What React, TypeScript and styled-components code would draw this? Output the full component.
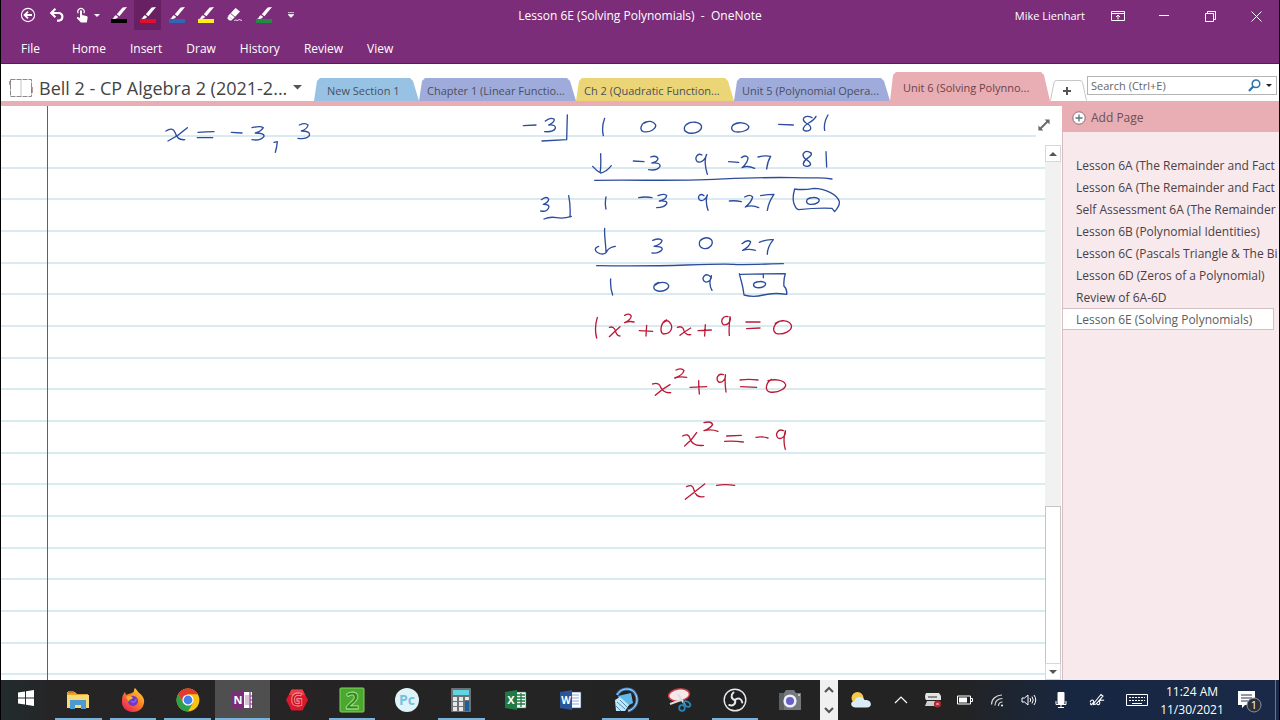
import React from "react";
import styled, { createGlobalStyle } from "styled-components";

const GlobalStyle = createGlobalStyle`
  *, *::before, *::after { box-sizing: border-box; }
  body { margin: 0; background: #000; }
  button, input { font: inherit; color: inherit; }
  button { border: 0; padding: 0; background: none; }
  ul { list-style: none; margin: 0; padding: 0; }
`;

const Frame = styled.div`
  display: flex;
  flex-direction: column;
  height: 100vh;
  border: solid #000;
  border-width: 0 1px;
  background: #fff;
  font-family: "Open Sans", "Noto Sans", sans-serif;
  font-size: 12px;
  line-height: 16px;
  overflow: hidden;
`;

/* ---------- window header ---------- */

const Header = styled.header`
  flex: none;
  background: #7c2d7a;
  border-bottom: 1px solid #5b1a5a;
  color: #fff;
`;

const TitleRow = styled.div`
  display: grid;
  grid-template-columns: 1fr auto 1fr;
  height: 32px;
`;

const QuickTools = styled.div`
  display: flex;
  gap: 2px;
  padding-left: 13px;
`;

const ToolButton = styled.button<{ $active?: boolean; $width?: number }>`
  display: flex;
  align-items: center;
  justify-content: center;
  gap: 6px;
  width: ${(p) => p.$width ?? 27}px;
  height: 30px;
  background: ${(p) => (p.$active ? "#672163" : "transparent")};
`;

const WindowTitle = styled.h1`
  margin: 0;
  align-self: center;
  font-size: 12px;
  font-weight: 400;
  white-space: pre;
`;

const WindowControls = styled.div`
  display: flex;
  justify-content: flex-end;
  align-items: center;
`;

const UserName = styled.span`
  margin-right: 10px;
  font-size: 11px;
`;

const ControlButton = styled.button`
  display: flex;
  align-items: center;
  justify-content: center;
  width: 46px;
  height: 32px;
`;

const Menu = styled.nav`
  display: flex;
  align-items: center;
  gap: 24px;
  height: 31px;
  padding: 2px 0 0 20px;
`;

const MenuButton = styled.button<{ $wide?: boolean }>`
  margin-right: ${(p) => (p.$wide ? 8 : 0)}px;
`;

/* ---------- notebook bar ---------- */

const NotebookBar = styled.div`
  display: flex;
  flex: none;
  align-items: flex-end;
  height: 37px;
  padding-right: 2px;
`;

const NotebookButton = styled.button`
  display: flex;
  flex: none;
  align-items: center;
  gap: 6px;
  width: 313px;
  height: 27px;
  padding-left: 8px;
  color: #444;
  font-size: 18px;
  line-height: 24px;
  white-space: nowrap;
`;

const Tabs = styled.div`
  display: flex;
  flex: 1;
  align-items: flex-end;
  min-width: 0;
`;

const Tab = styled.button<{ $color: string; $width: number; $active?: boolean; $inset?: boolean }>`
  flex: 0 1 ${(p) => p.$width}px;
  height: ${(p) => (p.$active ? 29 : 23)}px;
  padding: 2px 8px 0 ${(p) => (p.$active || p.$inset ? 13 : 8)}px;
  overflow: hidden;
  background: ${(p) => p.$color};
  clip-path: polygon(0 100%, 3px 3px, 6px 0, calc(100% - 9px) 0, calc(100% - 6px) 3px, 100% 100%);
  color: ${(p) => (p.$active ? "#6b4249" : "#4a5060")};
  font-size: 11px;
  text-align: left;
  white-space: nowrap;
`;

const NewTab = styled.button`
  flex: none;
  width: 37px;
  height: 21px;
`;

const SearchBox = styled.form`
  display: flex;
  flex: none;
  align-self: flex-start;
  align-items: center;
  width: 190px;
  height: 19px;
  margin-top: 12px;
  border: 1px solid #b4b4b4;
  color: #555;
`;

const SearchInput = styled.input`
  flex: 1;
  min-width: 0;
  height: 17px;
  padding: 0 3px;
  border: 0;
  outline: 0;
  background: transparent;
  font-size: 11px;
  &::placeholder { color: #666; opacity: 1; }
`;

const SearchButton = styled.button`
  display: flex;
  align-items: center;
  gap: 5px;
  padding-right: 4px;
`;

/* ---------- body ---------- */

const Body = styled.div`
  display: flex;
  flex: 1;
  min-height: 0;
`;

const PageArea = styled.main`
  display: flex;
  flex: 1;
  min-width: 0;
  border-top: 5px solid #e9aeb4;
`;

const Sheet = styled.svg`
  display: block;
  flex: 1;
  min-width: 0;
  height: 100%;
`;

const Rail = styled.div`
  display: flex;
  flex: none;
  flex-direction: column;
  width: 17px;
`;

const ExpandButton = styled.button`
  flex: none;
  width: 26px;
  height: 39px;
  margin-left: -9px;
  padding: 2px 0 0 1px;
  background: #fff;
  text-align: left;
`;

const ScrollTrack = styled.div`
  display: flex;
  flex: 1;
  flex-direction: column;
  width: 16px;
  background: #f1f1f1;
`;

const ScrollStep = styled.button`
  display: flex;
  flex: none;
  align-items: center;
  justify-content: center;
  height: 17px;
  border: 1px solid #d4d8dc;
  background: #fff;
`;

const ScrollGap = styled.div`
  flex: 11;
`;

const ScrollThumb = styled.div`
  flex: 5;
  border: 1px solid #c4c4c4;
  border-bottom: 0;
  background: #fff;
`;

const PagePane = styled.aside`
  display: flex;
  flex: none;
  flex-direction: column;
  width: 217px;
  background: #f8eaec;
`;

const AddPage = styled.button`
  display: flex;
  flex: none;
  align-items: center;
  gap: 5px;
  height: 31px;
  padding: 2px 0 0 10px;
  background: #e9aeb4;
  color: #6b5055;
  text-align: left;
`;

const PageList = styled.ul`
  flex: 1;
  padding: 22px 5px 0 0;
  border-left: 1px solid #d8bcc1;
`;

const PageLink = styled.a<{ $selected?: boolean }>`
  display: block;
  height: 22px;
  margin-left: -1px;
  padding-left: 13px;
  border: 1px solid ${(p) => (p.$selected ? "#d5bfc3" : "transparent")};
  background: ${(p) => (p.$selected ? "#fff" : "transparent")};
  color: ${(p) => (p.$selected ? "#5c5c5c" : "#4a4045")};
  line-height: 22px;
  text-decoration: none;
  white-space: nowrap;
`;

/* ---------- taskbar ---------- */

const Taskbar = styled.footer`
  display: flex;
  flex: none;
  height: 40px;
  background: linear-gradient(90deg, #222b2d 0, #262425 60px, #232323 75%, #172742 84%, #1a2947 100%);
  color: #fff;
`;

const StartButton = styled.button`
  flex: none;
  width: 50px;
`;

const Apps = styled.div`
  display: flex;
  flex: 1;
  min-width: 0;
  margin-right: 3px;
`;

const AppButton = styled.button<{ $running?: boolean; $active?: boolean }>`
  position: relative;
  display: flex;
  flex: 1;
  align-items: center;
  justify-content: center;
  min-width: 0;
  background: ${(p) => (p.$active ? "#4f4f50" : "transparent")};
  &::after {
    content: "";
    position: absolute;
    right: ${(p) => (p.$active ? 0 : 4)}px;
    bottom: 0;
    left: ${(p) => (p.$active ? 0 : 4)}px;
    height: 2px;
    background: ${(p) => (p.$running || p.$active ? "#79b3dc" : "transparent")};
  }
`;

const Stepper = styled.div`
  display: flex;
  flex: none;
  flex-direction: column;
  width: 18px;
  background: #f0f0f0;
`;

const StepperButton = styled.button`
  display: flex;
  flex: 1;
  align-items: center;
  justify-content: center;
`;

const Tray = styled.div`
  display: flex;
  flex: none;
`;

const TrayButton = styled.button<{ $width?: number }>`
  display: flex;
  align-items: center;
  justify-content: center;
  width: ${(p) => p.$width ?? 32}px;
`;

const Clock = styled.button`
  width: 70px;
  padding-top: 2px;
  line-height: 18px;
  text-align: center;
`;

const ShowDesktop = styled.button`
  width: 4px;
  margin-left: 4px;
  border-left: 1px solid #6d7789;
`;

/* ---------- icons ---------- */

const Caret = ({ color = "#fff", up = false, size = 8 }: { color?: string; up?: boolean; size?: number }) => (
  <svg width={size} height={size / 2} viewBox="0 0 8 4" aria-hidden="true">
    <path d={up ? "M0 4L4 0L8 4Z" : "M0 0H8L4 4Z"} fill={color} />
  </svg>
);

const Pen = ({ color }: { color: string }) => (
  <svg width="18" height="18" viewBox="0 0 18 18" aria-hidden="true">
    <rect x="1" y="13" width="16" height="4" fill={color} />
    <path d="M2 12.6C4.600 12 3.600 9.800 6 9.200L8 10.800C7.400 12.800 5 13.400 2 12.600Z" fill="#fff" />
    <path d="M6.800 8.200L12.600 1.600L17 1L9.400 10.200Z" fill="#fff" />
  </svg>
);

const BackIcon = () => (
  <svg width="16" height="16" viewBox="0 0 16 16" fill="none" stroke="#fff" aria-hidden="true">
    <circle cx="8" cy="8" r="6.6" strokeWidth="1.1" />
    <path d="M12 8H4.6M8 4.6L4.6 8L8 11.4" strokeWidth="1.9" />
  </svg>
);

const UndoIcon = () => (
  <svg width="16" height="16" viewBox="0 0 16 16" fill="none" stroke="#fff" aria-hidden="true">
    <path d="M2.5 6H10.4A3.9 3.9 0 0 1 10.4 13.6H8" strokeWidth="2.1" />
    <path d="M6.4 1.8L2.2 6L6.4 10.2" strokeWidth="2.1" />
  </svg>
);

const TouchIcon = () => (
  <svg width="12" height="16" viewBox="0 0 12 16" aria-hidden="true">
    <path d="M4 11V4.2C4 2.8 6 2.8 6 4.2V8L10.4 9C11.4 9.3 11.8 10 11.6 11L10.8 15.4H5L1 11.4C.4 10.4 1.6 9.6 2.4 10.2Z" fill="#fff" />
    <path d="M2.3 6.3A3.2 3.2 0 1 1 7.8 6.2" fill="none" stroke="#fff" strokeWidth="1.2" />
  </svg>
);

const EraserIcon = () => (
  <svg width="18" height="18" viewBox="0 0 18 18" aria-hidden="true">
    <path d="M9.6 2L14 5.6L6.6 13.6L2 10Z" fill="#fff" />
    <path d="M4.6 7.4L9 11.2" stroke="#7c2d7a" strokeWidth=".9" />
    <path d="M2 10L6.4 13.6L5.4 14.6H3.4L1.4 12.6Z" fill="#fff" />
    <path d="M8.4 14.6C10.4 13 11 15.4 12.6 14C14 12.8 14.4 14.6 15.8 14.4" fill="none" stroke="#fff" strokeWidth="1" />
  </svg>
);

const BookIcon = () => (
  <svg width="24" height="20" viewBox="0 0 24 20" fill="none" aria-hidden="true">
    <path d="M1.500 1.500H22.500V18.500H1.500Z" stroke="#8a8a8a" strokeDasharray="5 1" />
    <path d="M12 2V18" stroke="#c4c4c4" />
    <path d="M1 3V7M23 9V15" stroke="#a0726c" strokeWidth="1.4" />
  </svg>
);

const SearchIcon = () => (
  <svg width="13" height="13" viewBox="0 0 13 13" fill="none" stroke="#2f73ab" aria-hidden="true">
    <circle cx="8" cy="4.8" r="3.8" strokeWidth="1.5" />
    <path d="M5.2 7.6L1 12" strokeWidth="2.2" />
  </svg>
);

const ExpandIcon = () => (
  <svg width="14" height="14" viewBox="0 0 14 14" aria-hidden="true">
    <path d="M3 11L11 3" stroke="#6a6a6a" strokeWidth="2" />
    <path d="M7.6 1.4H12.6V6.4ZM1.4 7.6V12.6H6.4Z" fill="#6a6a6a" />
  </svg>
);

const Glyph = ({ children, size = 26 }: { children: React.ReactNode; size?: number }) => (
  <svg width={size} height={size} viewBox="0 0 26 26" aria-hidden="true">{children}</svg>
);

const apps: { name: string; running?: boolean; active?: boolean; icon: React.ReactNode }[] = [
  {
    name: "File Explorer",
    running: true,
    icon: (
      <>
        <path d="M2 5H10L12 7H23V21H2Z" fill="#e3a62e" />
        <path d="M2 8H24V21H2Z" fill="#f8d978" />
        <path d="M5 13H21V22H16V18H10V22H5Z" fill="#4c9bd0" />
        <path d="M3 4H9V6H3Z" fill="#c7791f" />
      </>
    ),
  },
  {
    name: "Firefox",
    running: true,
    icon: (
      <>
        <defs>
          <linearGradient id="fox" x1="1" y1="0" x2="0.2" y2="1">
            <stop offset="0" stopColor="#ffe94a" />
            <stop offset=".45" stopColor="#ff8a1f" />
            <stop offset="1" stopColor="#e9205c" />
          </linearGradient>
        </defs>
        <path d="M15 1C17 3 18 5 19 6C22 8 25 12 24 16C23 22 18 25 13 25C6 25 1 20 2 13C2 10 3 7 5 5L6 8C9 6 13 7 14 4C14 3 14 2 15 1Z" fill="url(#fox)" />
        <circle cx="13" cy="14" r="5" fill="#6a3bc4" />
        <path d="M6 10C9 8 12 9 13 11C11 13 9 12 9 15C8 13 7 12 6 10Z" fill="#ffb02a" />
        <path d="M11 14C13 16 16 15 16 12" fill="none" stroke="#a25bf0" strokeWidth="1.6" />
      </>
    ),
  },
  {
    name: "Chrome",
    running: true,
    icon: (
      <>
        <circle cx="13" cy="13" r="11.4" fill="#fbc116" />
        <path d="M3.1 7.3A11.4 11.4 0 0 1 22.9 7.3H13L8.1 15.9Z" fill="#e33b2e" />
        <path d="M3.1 7.3A11.4 11.4 0 0 0 13 24.4L17.9 15.9L13 18.6L8.1 15.9Z" fill="#2ca14c" />
        <circle cx="13" cy="13" r="5.6" fill="#fff" />
        <circle cx="13" cy="13" r="4.4" fill="#3f83ee" />
      </>
    ),
  },
  {
    name: "OneNote",
    active: true,
    icon: (
      <>
        <path d="M13 5H22V21H13Z" fill="#fff" />
        <path d="M15 8H19V18H15Z" fill="#d9c2da" />
        <path d="M20 5V21M20 9H23M20 13H23M20 17H23" stroke="#7c2d7a" strokeWidth="1.2" />
        <path d="M2 5L14 3V23L2 21Z" fill="#7c2d7a" />
        <text x="8" y="17" textAnchor="middle" fontSize="11" fontWeight="700" fill="#fff">N</text>
      </>
    ),
  },
  {
    name: "GoGuardian",
    icon: (
      <>
        <path d="M7.5 2.5H18.5L24 13L18.5 23.5H7.5L2 13Z" fill="#d8192c" />
        <path d="M7.5 2.5H18.5L21 8H5Z" fill="#ea3d48" />
        <text x="13" y="19" textAnchor="middle" fontSize="17" fontWeight="700" fill="#c41022" stroke="#f3a2a6" strokeWidth=".8">G</text>
      </>
    ),
  },
  {
    name: "SMART",
    running: true,
    icon: (
      <>
        <rect x="1" y="1" width="24" height="24" rx="1" fill="#49a82f" stroke="#86d35f" />
        <text x="13" y="22" textAnchor="middle" fontSize="24" fontWeight="700" fill="#2b8a24" stroke="#b6e59a" strokeWidth=".8">2</text>
      </>
    ),
  },
  {
    name: "PC Tools",
    icon: (
      <>
        <circle cx="13" cy="13" r="12" fill="#dff3f8" />
        <text x="13" y="18" textAnchor="middle" fontSize="14" fontWeight="700" fill="#74c3dd">Pc</text>
      </>
    ),
  },
  {
    name: "Calculator",
    running: true,
    icon: (
      <>
        <rect x="3" y="1" width="20" height="24" rx="1" fill="#6d7275" />
        <rect x="5" y="3" width="16" height="5" fill="#62d3e4" />
        <path d="M5 10H9V14H5ZM11 10H15V14H11ZM17 10H21V13H17ZM5 15H9V19H5ZM11 15H15V19H11ZM5 20H9V24H5ZM11 20H15V24H11Z" fill="#e6e8ea" />
        <rect x="17" y="14" width="4" height="10" fill="#1c5f9d" />
      </>
    ),
  },
  {
    name: "Excel",
    icon: (
      <>
        <path d="M12 5H23V21H12Z" fill="#fff" stroke="#1f7a45" strokeWidth=".6" />
        <path d="M14 8H22M14 11H22M14 14H22M14 17H22M18 6V20" stroke="#1f7a45" strokeWidth="1.3" />
        <path d="M2 5L14 3V23L2 21Z" fill="#1f7a45" />
        <text x="8" y="17" textAnchor="middle" fontSize="11" fontWeight="700" fill="#fff">X</text>
      </>
    ),
  },
  {
    name: "Word",
    icon: (
      <>
        <path d="M12 5H23V21H12Z" fill="#fff" stroke="#2a5699" strokeWidth=".6" />
        <path d="M14 8H21M14 11H21M14 14H21M14 17H21" stroke="#b5c8e6" strokeWidth="1.4" />
        <path d="M2 5L14 3V23L2 21Z" fill="#2a5699" />
        <text x="8" y="17" textAnchor="middle" fontSize="10" fontWeight="700" fill="#fff">W</text>
      </>
    ),
  },
  {
    name: "Interactive Display",
    running: true,
    icon: (
      <>
        <path d="M4 8C8 0 20 0 23 8C26 15 22 22 15 24" fill="none" stroke="#3f7fc0" strokeWidth="3" />
        <path d="M4 8C8 0 20 0 23 8C26 15 22 22 15 24" fill="none" stroke="#b9dcf5" strokeWidth="1" />
        <path d="M5 9L18 6L20 16L10 21Z" fill="#62b9e8" />
        <path d="M2 13L7 10L16 18L12 24H3Z" fill="#c3e6f6" />
        <path d="M4 15L12 22M7 13L14 20M3 19L8 24" stroke="#4b8fbf" strokeWidth="1" />
      </>
    ),
  },
  {
    name: "Snipping Tool",
    icon: (
      <>
        <ellipse cx="12" cy="8" rx="10.5" ry="6" transform="rotate(-8 12 8)" fill="#f6e8e9" stroke="#c63c46" strokeWidth="1.4" />
        <path d="M3 17L14 13M11 7L18 18" stroke="#d9dde0" strokeWidth="2" />
        <circle cx="15" cy="21" r="2.8" fill="none" stroke="#2a86b8" strokeWidth="1.8" />
        <ellipse cx="20" cy="17" rx="3.6" ry="2.4" transform="rotate(30 20 17)" fill="none" stroke="#2a86b8" strokeWidth="1.8" />
      </>
    ),
  },
  {
    name: "OBS Studio",
    running: true,
    icon: (
      <g fill="none" stroke="#e8e8e8">
        <circle cx="13" cy="13" r="10.8" strokeWidth="1.4" fill="#1f1e22" />
        {[0, 120, 240].map((a) => (
          <path key={a} transform={`rotate(${a} 13 13)`} d="M13 13C9 12 8.500 8 11.500 5.500" strokeWidth="2" strokeLinecap="round" />
        ))}
      </g>
    ),
  },
  {
    name: "Camera",
    icon: (
      <>
        <path d="M2 6H7L9 3H17L19 6H24V23H2Z" fill="#74797d" />
        <path d="M2 6H7V23H2Z" fill="#5b6064" />
        <circle cx="13" cy="14" r="6.6" fill="#eef0fa" />
        <circle cx="13" cy="14" r="4" fill="#6a5fc9" />
        <circle cx="22" cy="8" r="1" fill="#d8dadc" />
      </>
    ),
  },
];

/* ---------- ink ---------- */

type InkStroke = { says: string; d: string };
type InkBlock = { x: number; y: number; width: number; height: number; color: string; strokes: InkStroke[] };

const BLUE = "#2c4c9e";
const RED = "#bb1a36";

/* Each block is recorded at three ink units to the pixel. */
const ink: InkBlock[] = [
  {
    x: 139, y: -1, width: 200, height: 60, color: BLUE,
    strokes: [
      { says: "x = -3, 3", d: "M78 78Q98 64 106 84Q112 106 134 104M142 68Q116 92 84 108M174 82Q196 80 222 80M172 98L218 98M274 82L306 84M336 68Q362 62 370 68Q362 80 346 84Q374 84 372 94Q362 108 336 104M402 112L412 110Q410 130 406 142M478 60Q496 52 504 60Q502 72 484 78Q512 78 508 92Q498 104 474 100" },
    ],
  },
  {
    x: 499, y: -1, width: 360, height: 200, color: BLUE,
    strokes: [
      { says: "-3 divides 1 0 0 0 -81", d: "M70 62L108 60M136 48Q150 36 162 42Q166 50 146 60Q168 58 166 70Q160 82 134 80M202 30L200 104L126 108M314 40Q304 66 310 92M442 50C424 52 416 74 430 80C450 84 472 70 466 58C458 48 444 46 434 54M572 52C550 58 546 78 566 84C588 88 608 76 604 62C598 50 574 48 560 58M716 54C694 56 688 74 704 80C726 84 750 74 746 64C740 54 714 48 700 60M836 58L880 60M936 38C916 28 900 42 918 54C938 64 936 78 918 78C902 76 912 62 926 54C936 48 944 42 948 34M984 30Q970 54 974 76" },
      { says: "-3 9 -27 81", d: "M302 146C302 160 304 190 300 202M278 184Q288 196 302 204Q318 202 334 182M400 168L432 170M452 156Q468 150 474 160Q474 170 456 174Q482 172 480 184Q472 198 446 194M606 150C592 142 582 160 592 170C606 176 618 160 620 148C612 160 616 190 622 208M686 170L716 172M724 158Q736 148 744 158Q744 172 726 188Q742 180 764 190M774 156Q794 150 812 154Q802 170 800 192M934 144C916 132 902 146 914 160C930 170 940 180 922 184C904 184 908 170 922 160C934 152 938 146 930 142M978 140L980 186" },
      { says: "line", d: "M284 226C400 224 520 228 620 224S780 216 880 218S960 216 996 222" },
      { says: "3 divides 1 -3 9 -27 0", d: "M124 284Q140 272 146 282Q146 292 130 298Q150 298 146 308Q140 322 122 318M206 272Q212 300 210 336M214 334Q190 342 170 338Q150 334 132 342M318 276Q314 296 318 312M416 278Q436 274 456 278M474 272Q496 264 500 272Q498 284 478 288Q504 286 500 296Q494 308 470 308M612 272C600 262 592 276 598 284C608 292 620 280 622 270C616 286 620 304 624 316M688 288Q706 286 724 290M734 276Q750 266 758 276Q754 292 736 306Q756 298 776 308M782 272Q802 268 822 268Q806 290 802 316M884 252Q876 280 882 296Q888 312 896 314Q950 308 996 310L1004 320Q1020 302 1018 290Q1014 274 990 262Q966 250 942 250Q910 256 884 252M932 278C916 282 916 296 930 298C948 300 962 290 956 282C950 276 936 276 924 282" },
      { says: "3 0 27", d: "M314 370C312 390 318 420 318 442M296 424C282 428 282 440 300 446Q318 450 322 436Q330 426 346 424M458 406Q480 398 486 406Q484 418 462 424Q490 424 486 434Q478 446 456 444M610 400C594 406 594 426 610 430C630 434 642 416 634 404C626 396 612 396 602 406M726 416Q742 402 752 410Q750 424 728 436Q746 430 766 436M778 412Q800 402 820 404Q802 426 802 448" },
      { says: "line", d: "M290 482Q440 484 560 480T700 478T850 476" },
      { says: "1 0 9 0", d: "M332 522Q330 546 338 570M476 532C458 538 456 554 474 558C494 562 512 548 504 538C498 530 476 530 466 540M630 514C616 502 604 518 612 528C624 538 636 522 634 512C628 528 630 546 636 556M722 508Q790 506 856 506Q850 524 852 544Q862 552 860 568Q820 562 790 570Q760 578 732 570Q728 540 722 522L718 506M774 530C758 532 756 544 770 548C786 550 800 542 796 534C790 528 776 528 764 534M790 508V518" },
    ],
  },
  {
    x: 569, y: 194, width: 260, height: 210, color: RED,
    strokes: [
      { says: "1x² + 0x + 9 = 0", d: "M82 52Q72 84 80 114M118 82Q132 78 136 92Q140 108 150 108M150 80Q132 96 118 110M164 46Q178 38 184 48Q182 60 164 68Q178 62 192 66M208 92L248 94M230 76L228 108M290 60C272 66 268 96 280 102C304 102 312 80 298 66C292 60 286 62 280 68M322 82Q338 76 342 92Q348 106 362 104M362 84Q342 96 330 106M384 92L424 90M406 74L404 108M474 50C458 46 450 64 460 74C476 78 484 60 480 50C478 70 476 90 478 106M528 66L570 66M530 86L570 84M636 62C612 68 604 90 618 100C640 106 668 92 664 76C658 60 632 58 616 70" },
      { says: "x² + 9 = 0", d: "M248 252Q268 246 272 262Q280 280 302 278M300 254Q278 266 256 286M318 210Q336 202 342 212Q338 226 314 234Q332 228 350 232M360 262L410 260M386 242Q386 262 388 282M460 224C444 218 436 236 446 246C460 250 468 234 466 224Q464 250 468 276M510 240Q536 236 564 240M512 260L560 262M604 238C586 250 584 272 600 276C628 280 652 262 646 252C640 240 616 236 594 242" },
      { says: "x² = -9", d: "M338 408Q356 398 360 416Q368 440 400 436M380 398Q366 420 344 438M402 368Q424 362 428 374Q420 386 402 392Q424 386 444 394M470 408L514 406M464 424Q490 422 520 426M558 412Q576 408 594 414M640 392C624 384 614 404 624 414C638 420 648 404 646 392Q638 420 646 448" },
      { says: "x =", d: "M350 560Q368 550 372 570Q378 594 402 590M404 552Q376 574 346 598M440 556Q464 552 494 556" },
    ],
  },
];

const RULES = 40;
const ruleY = (i: number) => Math.round(29 + (i * 95) / 3);

const pages = [
  "Lesson 6A (The Remainder and Fact",
  "Lesson 6A (The Remainder and Fact",
  "Self Assessment 6A (The Remainder",
  "Lesson 6B (Polynomial Identities)",
  "Lesson 6C (Pascals Triangle & The Bi",
  "Lesson 6D (Zeros of a Polynomial)",
  "Review of 6A-6D",
  "Lesson 6E (Solving Polynomials)",
];

const sections = [
  { label: "New Section 1", color: "#98c2e4", width: 105, inset: true },
  { label: "Chapter 1 (Linear Functio...", color: "#9fabda", width: 157 },
  { label: "Ch 2 (Quadratic Function...", color: "#ecd576", width: 158 },
  { label: "Unit 5 (Polynomial Opera...", color: "#9fabda", width: 156 },
  { label: "Unit 6 (Solving Polynno...", color: "#e9aeb4", width: 160, active: true },
];

export default function App() {
  return (
    <Frame>
      <GlobalStyle />
      <Header>
        <TitleRow>
          <QuickTools>
            <ToolButton aria-label="Back"><BackIcon /></ToolButton>
            <ToolButton aria-label="Undo"><UndoIcon /></ToolButton>
            <ToolButton aria-label="Touch mode" $width={31}><TouchIcon /><Caret size={6} /></ToolButton>
            <ToolButton aria-label="Black pen"><Pen color="#000" /></ToolButton>
            <ToolButton aria-label="Red pen" $active><Pen color="#e0102a" /></ToolButton>
            <ToolButton aria-label="Blue pen"><Pen color="#2f66b5" /></ToolButton>
            <ToolButton aria-label="Yellow highlighter"><Pen color="#ffee1a" /></ToolButton>
            <ToolButton aria-label="Eraser"><EraserIcon /></ToolButton>
            <ToolButton aria-label="Green pen"><Pen color="#238a43" /></ToolButton>
            <ToolButton aria-label="Customize toolbar" $width={24}>
              <svg width="6" height="6" viewBox="0 0 6 6" aria-hidden="true">
                <path d="M0 .5H6M0 2.4H6L3 5.6Z" fill="#fff" stroke="#fff" strokeWidth=".6" />
              </svg>
            </ToolButton>
          </QuickTools>
          <WindowTitle>{"Lesson 6E (Solving Polynomials)  -  OneNote"}</WindowTitle>
          <WindowControls>
            <UserName>Mike Lienhart</UserName>
            <ControlButton aria-label="Ribbon display options">
              <svg width="14" height="12" viewBox="0 0 14 12" fill="none" stroke="#fff" aria-hidden="true">
                <path d="M.5 1.5H13.5V10.5H.5ZM.5 3.5H13.5M7 9.5V5M5 7L7 5L9 7" />
              </svg>
            </ControlButton>
            <ControlButton aria-label="Minimize">
              <svg width="10" height="2" viewBox="0 0 10 2" aria-hidden="true"><path d="M0 .5H10" stroke="#fff" /></svg>
            </ControlButton>
            <ControlButton aria-label="Restore">
              <svg width="11" height="11" viewBox="0 0 11 11" fill="none" stroke="#fff" aria-hidden="true">
                <path d="M.5 2.5H8.5V10.5H.5ZM2.5 2.5V.5H10.5V8.5H8.5" />
              </svg>
            </ControlButton>
            <ControlButton aria-label="Close">
              <svg width="11" height="11" viewBox="0 0 11 11" stroke="#fff" aria-hidden="true"><path d="M.5 .5L10.5 10.5M10.5 .5L.5 10.5" /></svg>
            </ControlButton>
          </WindowControls>
        </TitleRow>
        <Menu>
          {["File", "Home", "Insert", "Draw", "History", "Review", "View"].map((m) => (
            <MenuButton key={m} $wide={m === "File"}>{m}</MenuButton>
          ))}
        </Menu>
      </Header>

      <NotebookBar>
        <NotebookButton>
          <BookIcon />
          Bell 2 - CP Algebra 2 (2021-2...
          <Caret color="#555" size={9} />
        </NotebookButton>
        <Tabs>
          {sections.map((s) => (
            <Tab key={s.label} $color={s.color} $width={s.width} $active={s.active} $inset={s.inset}>
              {s.label}
            </Tab>
          ))}
          <NewTab aria-label="Create a new section">
            <svg width="37" height="21" viewBox="0 0 37 21" fill="none" aria-hidden="true">
              <path d="M.5 20.5L4 2.5Q4.5 .5 6.5 .5H30Q32 .5 32.5 2.5L36.5 20.5" stroke="#c6c6c6" />
              <path d="M13 11H21M17 7V15" stroke="#555" strokeWidth="2" />
            </svg>
          </NewTab>
        </Tabs>
        <SearchBox>
          <SearchInput aria-label="Search" placeholder="Search (Ctrl+E)" />
          <SearchButton type="button" aria-label="Search options"><SearchIcon /><Caret color="#222" size={6} /></SearchButton>
        </SearchBox>
      </NotebookBar>

      <Body>
        <PageArea>
          <Sheet role="img" aria-label="Handwritten notes on ruled paper">
            {Array.from({ length: RULES }, (_, i) => (
              <rect key={i} x="0" y={ruleY(i)} width="100%" height="2" fill="#d9ebf1" />
            ))}
            <rect x="46" y="0" width="1" height="100%" fill="#d22c48" />
            {ink.map((b) => (
              <svg key={b.y + b.x} x={b.x} y={b.y} width={b.width} height={b.height} viewBox={`0 0 ${b.width * 3} ${b.height * 3}`}>
                {b.strokes.map((s, i) => (
                  <path key={i} aria-label={s.says} d={s.d} fill="none" stroke={b.color} strokeWidth="4" strokeLinecap="round" strokeLinejoin="round" />
                ))}
              </svg>
            ))}
          </Sheet>
          <Rail>
            <ExpandButton aria-label="Full page view"><ExpandIcon /></ExpandButton>
            <ScrollTrack>
              <ScrollStep aria-label="Scroll up"><Caret up color="#555" size={8} /></ScrollStep>
              <ScrollGap />
              <ScrollThumb />
              <ScrollStep aria-label="Scroll down"><Caret color="#555" size={8} /></ScrollStep>
            </ScrollTrack>
          </Rail>
        </PageArea>
        <PagePane>
          <AddPage>
            <svg width="14" height="14" viewBox="0 0 14 14" aria-hidden="true">
              <circle cx="7" cy="7" r="6.2" fill="#fff" stroke="#8a6a70" />
              <path d="M3.5 7H10.5M7 3.5V10.5" stroke="#5b7280" strokeWidth="1.3" />
            </svg>
            Add Page
          </AddPage>
          <PageList>
            {pages.map((p, i) => (
              <li key={i}>
                <PageLink href="#" $selected={i === pages.length - 1}>{p}</PageLink>
              </li>
            ))}
          </PageList>
        </PagePane>
      </Body>

      <Taskbar>
        <StartButton aria-label="Start">
          <svg width="18" height="18" viewBox="0 0 18 18" fill="#fff" aria-hidden="true">
            <path d="M1 3.5L8 2.4V8.5H1ZM9 2.2L17 1V8.5H9ZM1 9.5H8V15.6L1 14.6ZM9 9.5H17V17L9 15.8Z" />
          </svg>
        </StartButton>
        <Apps>
          {apps.map((a) => (
            <AppButton key={a.name} aria-label={a.name} $running={a.running} $active={a.active}>
              <Glyph>{a.icon}</Glyph>
            </AppButton>
          ))}
        </Apps>
        <Stepper>
          {["M1 6L5 2L9 6", "M1 2L5 6L9 2"].map((d, i) => (
            <StepperButton key={d} aria-label={i ? "Next" : "Previous"}>
              <svg width="10" height="8" viewBox="0 0 10 8" fill="none" stroke="#505050" strokeWidth="2" aria-hidden="true"><path d={d} /></svg>
            </StepperButton>
          ))}
        </Stepper>
        <Tray>
          <TrayButton $width={46} aria-label="Weather">
            <svg width="22" height="18" viewBox="0 0 22 18" aria-hidden="true">
              <circle cx="7.5" cy="7" r="6" fill="#f7c948" />
              <path d="M5 16.5C0 16.5 0 10 4.5 10C5.5 5 13 4.5 14.5 9C22 8 23 16.5 17 16.5Z" fill="#d9ecf8" />
            </svg>
          </TrayButton>
          <TrayButton $width={33} aria-label="Show hidden icons">
            <svg width="14" height="8" viewBox="0 0 14 8" fill="none" stroke="#fff" strokeWidth="1.2" aria-hidden="true"><path d="M1 7L7 1L13 7" /></svg>
          </TrayButton>
          <TrayButton aria-label="Printer">
            <svg width="18" height="16" viewBox="0 0 18 16" aria-hidden="true">
              <path d="M2 1H15L17 4V8H2Q0 5 2 1Z" fill="#e4e4e4" />
              <path d="M4 4H13V6H4Z" fill="#8a8a8a" />
              <path d="M3 9H11V14H1Z" fill="#cfcfcf" />
              <circle cx="13.5" cy="12" r="3.6" fill="#b32530" />
              <path d="M12.3 10.800L14.700 13.200M14.700 10.800L12.300 13.200" stroke="#f0c8cb" />
            </svg>
          </TrayButton>
          <TrayButton aria-label="Battery">
            <svg width="16" height="10" viewBox="0 0 16 10" aria-hidden="true">
              <path d="M.5 1H13.5V9H.5ZM14 3.5H15.5V6.5H14" fill="none" stroke="#fff" />
              <path d="M2 2.5H10V7.5H2Z" fill="#fff" />
            </svg>
          </TrayButton>
          <TrayButton aria-label="Network">
            <svg width="14" height="14" viewBox="0 0 14 14" fill="none" stroke="#d5d5d5" strokeWidth="1.2" aria-hidden="true">
              <path d="M1.5 11.5C1.5 6 6 2 12 2M5 12.5C5 8 8 5.5 12.5 5.5M8.5 13C8.5 10.5 10 9 12.5 9" />
              <circle cx="12" cy="12.5" r="1" fill="#fff" stroke="none" />
            </svg>
          </TrayButton>
          <TrayButton aria-label="Volume">
            <svg width="16" height="14" viewBox="0 0 16 14" fill="none" stroke="#fff" aria-hidden="true">
              <path d="M1 5H3.5L7 2V12L3.5 9H1ZM9 5Q10.3 7 9 9M11 3.5Q13.5 7 11 10.5M13 2Q16.5 7 13 12" />
            </svg>
          </TrayButton>
          <TrayButton aria-label="Microphone">
            <svg width="12" height="18" viewBox="0 0 12 18" aria-hidden="true">
              <rect x="2.5" y="1" width="7" height="12" rx="1" fill="#fff" />
              <path d="M1 10V13.5H11V10M6 13V16M3 16.5H9" fill="none" stroke="#fff" />
            </svg>
          </TrayButton>
          <TrayButton $width={40} aria-label="Windows Ink">
            <svg width="16" height="14" viewBox="0 0 16 14" fill="none" stroke="#fff" strokeWidth="1.1" aria-hidden="true">
              <path d="M5 10L12 1.5L14 3L7 11L4.5 11.5ZM1 9C3 5 6 8 4 10C2 13 1 11 2 10M8 11C10 13 12 10 10 8C12 6 14 8 15 7" />
            </svg>
          </TrayButton>
          <TrayButton $width={40} aria-label="Touch keyboard">
            <svg width="22" height="14" viewBox="0 0 22 14" fill="none" stroke="#fff" aria-hidden="true">
              <path d="M.5 1.5H21.5V12.5H.5Z" />
              <path d="M3 4.5H19M3 7.5H19" strokeDasharray="2 1" />
              <path d="M6 10.5H16" />
            </svg>
          </TrayButton>
          <Clock>11:24 AM<br />11/30/2021</Clock>
          <TrayButton $width={44} aria-label="Notifications">
            <svg width="26" height="26" viewBox="0 0 26 26" aria-hidden="true">
              <path d="M2 4H19V18H9L6 21V18H2Z" fill="#fff" />
              <path d="M5 8H16M5 11H16M5 14H12" stroke="#26334b" />
              <circle cx="18" cy="18" r="7" fill="#2b2f3a" stroke="#8d929c" />
              <text x="18" y="22" textAnchor="middle" fontSize="11" fill="#fff">1</text>
            </svg>
          </TrayButton>
          <ShowDesktop aria-label="Show desktop" />
        </Tray>
      </Taskbar>
    </Frame>
  );
}
